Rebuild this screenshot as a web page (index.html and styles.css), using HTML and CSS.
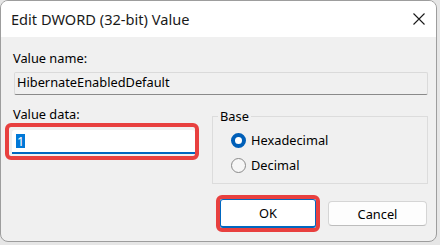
FILE: index.html
```html
<!DOCTYPE html>
<html lang="en">
<head>
    <meta charset="UTF-8">
    <title>Edit DWORD (32-bit) Value</title>
    <link rel="stylesheet" href="styles.css">
</head>
<body>
    <div class="window">
        <div class="titlebar">
            <span class="title">Edit DWORD (32-bit) Value</span>
            <svg class="close" width="12" height="12" viewBox="0 0 12 12">
                <path d="M0.5 0.5 L11.5 11.5 M11.5 0.5 L0.5 11.5" stroke="#1a1a1a" stroke-width="1.1" fill="none"/>
            </svg>
        </div>

        <div class="content">
            <div class="label">Value name:</div>
            <div class="field readonly">HibernateEnabledDefault</div>

            <div class="row">
                <div class="data-col">
                    <div class="label">Value data:</div>
                    <div class="highlight data-highlight">
                        <div class="field edit"><span class="sel">1</span></div>
                    </div>
                </div>

                <fieldset class="group">
                    <legend>Base</legend>
                    <div class="option"><span class="radio checked"></span>Hexadecimal</div>
                    <div class="option"><span class="radio"></span>Decimal</div>
                </fieldset>
            </div>

            <div class="buttons">
                <div class="highlight ok-highlight">
                    <button class="btn default">OK</button>
                </div>
                <button class="btn">Cancel</button>
            </div>
        </div>
    </div>
</body>
</html>
```

FILE: styles.css
```css
body {
    margin: 0;
    background-color: #e6e6e6;
    font-family: "Noto Sans", "Open Sans", sans-serif;
    color: #000;
}
.window {
    width: 437px;
    height: 242px;
    box-sizing: border-box;
    border: 1px solid #9d9d9d;
    border-radius: 8px;
    background-color: #f0f0f0;
    overflow: hidden;
}
.titlebar {
    height: 36px;
    background-color: #fff;
    display: flex;
    align-items: center;
    justify-content: space-between;
    padding: 0 11px 0 10px;
}
.title {
    font-size: 14.6px;
    line-height: 20px;
    color: #1a1a1a;
}
.close {
    display: block;
}
.content {
    padding: 13px 8px 0 12px;
    font-size: 12.8px;
}
.label {
    line-height: 16px;
}
.field {
    box-sizing: border-box;
    height: 23px;
    margin-top: 6px;
    margin-left: 1px;
    padding: 1px 0 0 2px;
    line-height: 17px;
}
.field.readonly {
    border: 1px solid #dadada;
    border-bottom-color: #8a8a8a;
    border-radius: 2px;
}
.row {
    display: flex;
    margin-top: 11px;
}
.data-col {
    width: 187px;
}
.highlight {
    box-sizing: border-box;
    border: 4px solid #e8403f;
    border-radius: 6px;
}
.data-highlight {
    width: 194px;
    height: 37px;
    margin: 1px 0 0 -8px;
    padding: 3px 0 0 3px;
}
.field.edit {
    width: 183px;
    height: 24px;
    margin: 0;
    padding: 4px 0 0 4px;
    background-color: #fff;
    border-bottom: 2px solid #0067c0;
    border-radius: 3px 3px 0 0;
    line-height: 14px;
}
.sel {
    display: inline-block;
    padding: 0 1px;
    height: 14px;
    background-color: #0078d7;
    color: #fff;
}
.group {
    box-sizing: border-box;
    width: 216px;
    margin: 2px 0 0 12px;
    padding: 8px 0 10px 5px;
    border: 1px solid #dcdcdc;
    border-radius: 0;
}
.group legend {
    padding: 0 2px;
    line-height: 16px;
}
.option {
    display: flex;
    align-items: center;
    height: 16px;
    margin-left: 13px;
    gap: 5px;
}
.option + .option {
    margin-top: 9px;
}
.radio {
    box-sizing: border-box;
    width: 15px;
    height: 15px;
    border-radius: 50%;
    border: 1px solid #8a8a8a;
    background-color: #f6f6f6;
}
.radio.checked {
    border: 4.5px solid #005fb8;
    background-color: #fff;
}
.buttons {
    display: flex;
    justify-content: flex-end;
    align-items: center;
    gap: 8px;
    margin-top: 11px;
    padding-right: 1px;
}
.ok-highlight {
    width: 104px;
    height: 37px;
}
.btn {
    box-sizing: border-box;
    width: 99px;
    height: 25px;
    padding: 0;
    font-family: inherit;
    font-size: 12.8px;
    color: #000;
    background-color: #fdfdfd;
    border: 1px solid #d5d5d5;
    border-bottom-color: #bdbdbd;
    border-radius: 4px;
}
.btn.default {
    width: 96px;
    height: 29px;
    background-color: #fff;
    border: 1px solid #0067c0;
    border-bottom-width: 2px;
    border-radius: 3px;
}
```
